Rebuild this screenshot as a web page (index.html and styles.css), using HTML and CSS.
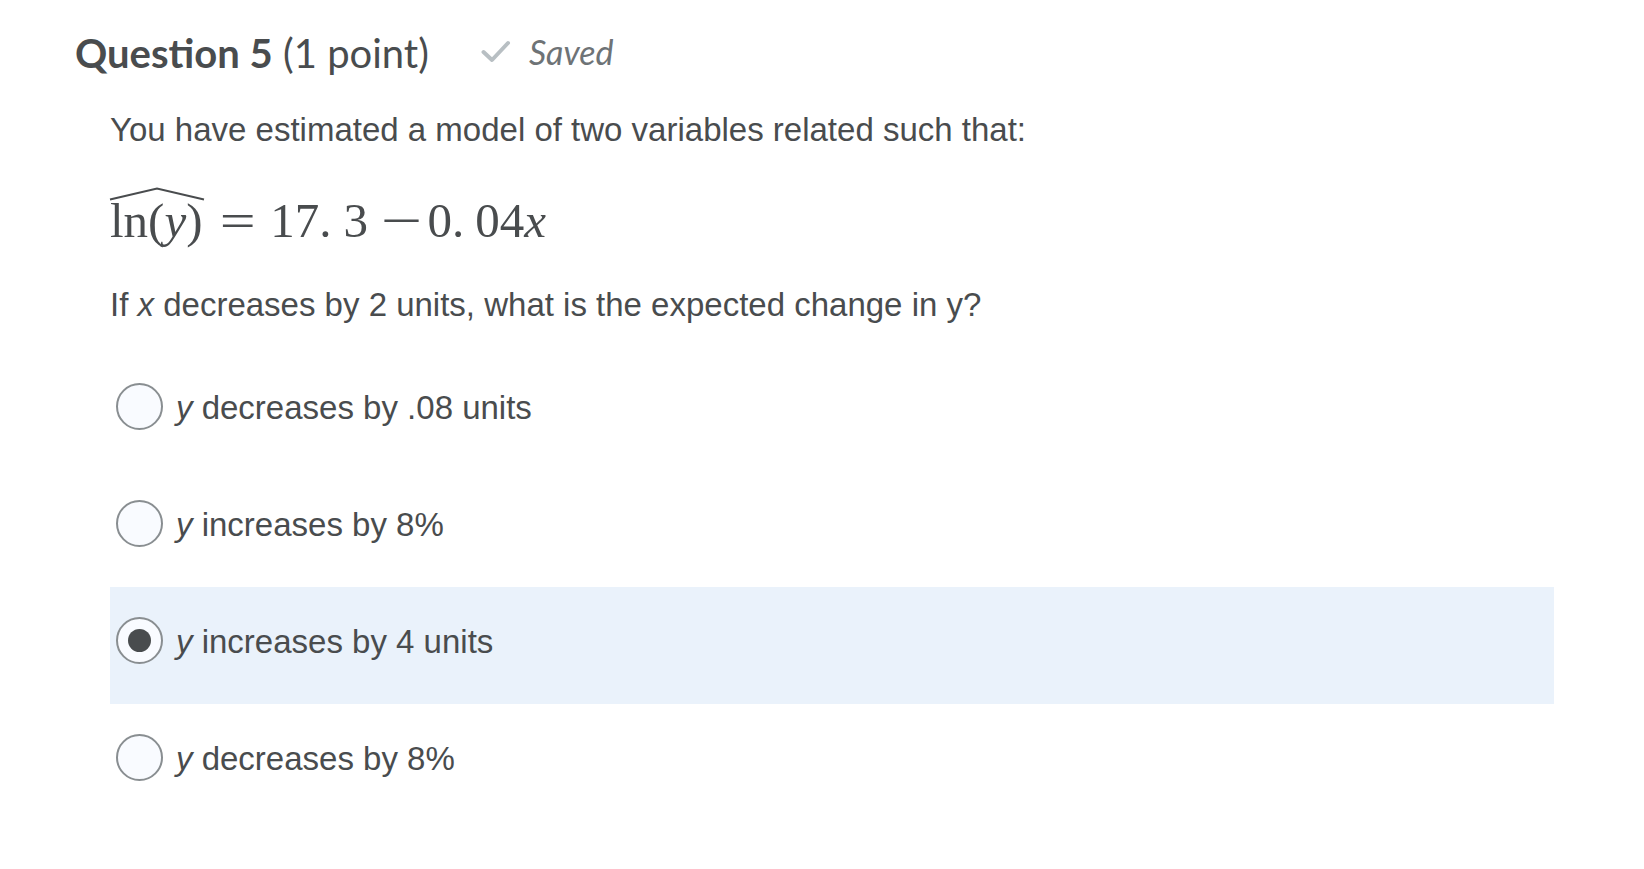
FILE: index.html
```html
<!DOCTYPE html>
<html lang="en">
<head>
<meta charset="utf-8">
<title>Question 5</title>
<link rel="stylesheet" href="styles.css">
</head>
<body>
<div class="page">
  <div class="header">
    <h2 class="title"><strong>Question 5</strong> (1 point)</h2>
    <span class="saved">
      <svg class="check" width="30" height="24" viewBox="0 0 30 24" aria-hidden="true"><path d="M2.5 12 L11 20 L27 3" fill="none" stroke="#b8bfc3" stroke-width="4" stroke-linecap="round" stroke-linejoin="round"/></svg>
      <em>Saved</em>
    </span>
  </div>
  <div class="question">
    <p class="text first">You have estimated a model of two variables related such that:</p>
    <div class="math"><span class="hatted"><svg class="hat" width="96" height="14" viewBox="0 0 96 14" aria-hidden="true"><path d="M1 12.5 L48 1.5 L95 12.5" fill="none" stroke="#494c4e" stroke-width="2"/></svg>ln(<i>y</i>)</span><span class="op eq">=</span><span>17.</span><span class="gap">3</span><span class="op minus">−</span><span>0.</span><span class="gap2">04<i>x</i></span></div>
    <p class="text second">If <i>x</i> decreases by 2 units, what is the expected change in y?</p>
    <ul class="options">
      <li class="option"><span class="radio"></span><span class="label"><i>y</i> decreases by .08 units</span></li>
      <li class="option"><span class="radio"></span><span class="label"><i>y</i> increases by 8%</span></li>
      <li class="option selected"><span class="radio"><span class="dot"></span></span><span class="label"><i>y</i> increases by 4 units</span></li>
      <li class="option"><span class="radio"></span><span class="label"><i>y</i> decreases by 8%</span></li>
    </ul>
  </div>
</div>
</body>
</html>
```
FILE: styles.css
```css
html, body {
  margin: 0;
  padding: 0;
  background: #ffffff;
}
body {
  font-family: "Liberation Sans", Arial, sans-serif;
  color: #494c4e;
}
.page {
  padding-left: 75px;
}
.header {
  display: flex;
  align-items: flex-start;
  margin-top: 29px;
  height: 48px;
}
.title {
  margin: 0;
  font-family: Lato, "Liberation Sans", sans-serif;
  font-size: 40px;
  line-height: 48px;
  font-weight: 400;
  color: #494c4e;
}
.title strong {
  font-weight: 700;
}
.saved {
  display: flex;
  align-items: center;
  margin-left: 52px;
  margin-top: 3px;
  height: 40px;
  font-family: Lato, "Liberation Sans", sans-serif;
  font-size: 34px;
  line-height: 40px;
  color: #6e7376;
}
.check {
  display: block;
  margin-right: 18px;
}
.saved em {
  font-style: italic;
}
.question {
  margin-left: 35px;
  margin-right: 90px;
}
.text {
  margin: 0;
  font-size: 33px;
  line-height: 40px;
}
.text.first {
  margin-top: 33px;
}
.math {
  margin-top: 41px;
  font-family: "Liberation Serif", "Times New Roman", serif;
  font-size: 49px;
  line-height: 60px;
  height: 60px;
  white-space: nowrap;
}
.hatted {
  position: relative;
  display: inline-block;
}
.hat {
  position: absolute;
  left: -1px;
  top: -4px;
}
.op {
  display: inline-block;
}
.eq {
  margin: 0 19px 0 21px;
  transform: scaleX(1.3);
}
.minus {
  margin: 0 12px 0 20px;
  transform: scaleX(1.5);
}
.gap {
  margin-left: 12px;
}
.gap2 {
  margin-left: 11px;
}
.text.second {
  margin-top: 34px;
}
.options {
  list-style: none;
  margin: 28px 0 0 0;
  padding: 0;
}
.option {
  display: flex;
  align-items: flex-start;
  height: 117px;
  box-sizing: border-box;
  padding: 30px 0 0 6px;
}
.option.selected {
  background: #eaf2fb;
}
.radio {
  width: 47px;
  height: 47px;
  box-sizing: border-box;
  border: 2px solid #898e91;
  border-radius: 50%;
  background: #f9fbff;
  display: flex;
  align-items: center;
  justify-content: center;
  flex: none;
}
.dot {
  width: 23px;
  height: 23px;
  border-radius: 50%;
  background: #494c4e;
}
.label {
  margin-left: 13px;
  margin-top: 6px;
  font-size: 33px;
  line-height: 37px;
}
```
